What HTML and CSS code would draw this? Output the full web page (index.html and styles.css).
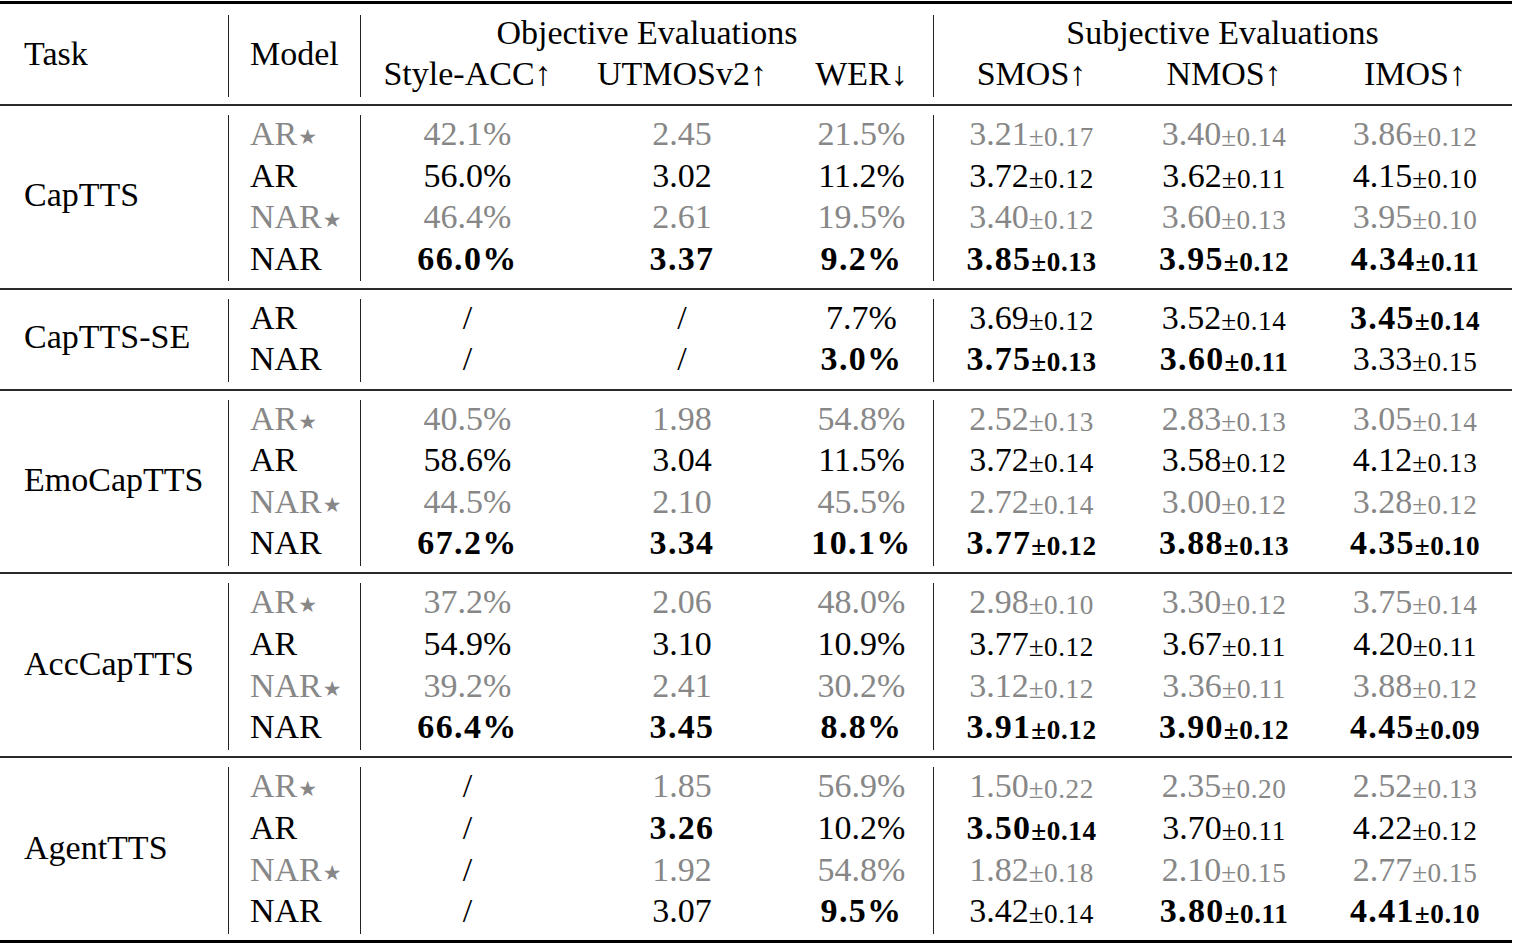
FILE: index.html
```html
<!DOCTYPE html>
<html lang="en">
<head>
<meta charset="utf-8">
<title>Evaluation results</title>
<link rel="stylesheet" href="styles.css">
</head>
<body>
<div class="table">
  <div class="heavy top"></div>

  <div class="head">
    <div class="h-task"><span class="ht">Task</span></div>
    <div class="h-model vl"><span class="ht">Model</span></div>
    <div class="group vl">
      <div class="ht gtitle">Objective Evaluations</div>
      <div class="gsub obj"><span class="ht">Style-ACC↑</span><span class="ht">UTMOSv2↑</span><span class="ht">WER↓</span></div>
    </div>
    <div class="group vl">
      <div class="ht gtitle">Subjective Evaluations</div>
      <div class="gsub subj"><span class="ht">SMOS↑</span><span class="ht">NMOS↑</span><span class="ht">IMOS↑</span></div>
    </div>
  </div>

  <div class="rule"></div>

  <div class="sec n4">
    <div class="task">CapTTS</div>
    <div class="m g">AR<span class="star">★</span></div><div class="v vl g">42.1%</div><div class="v g">2.45</div><div class="v g">21.5%</div><div class="v vl g">3.21<span class="pm">±0.17</span></div><div class="v g">3.40<span class="pm">±0.14</span></div><div class="v g">3.86<span class="pm">±0.12</span></div>
    <div class="m">AR</div><div class="v vl">56.0%</div><div class="v">3.02</div><div class="v">11.2%</div><div class="v vl">3.72<span class="pm">±0.12</span></div><div class="v">3.62<span class="pm">±0.11</span></div><div class="v">4.15<span class="pm">±0.10</span></div>
    <div class="m g">NAR<span class="star">★</span></div><div class="v vl g">46.4%</div><div class="v g">2.61</div><div class="v g">19.5%</div><div class="v vl g">3.40<span class="pm">±0.12</span></div><div class="v g">3.60<span class="pm">±0.13</span></div><div class="v g">3.95<span class="pm">±0.10</span></div>
    <div class="m">NAR</div><div class="v vl b">66.0%</div><div class="v b">3.37</div><div class="v b">9.2%</div><div class="v vl b">3.85<span class="pm">±0.13</span></div><div class="v b">3.95<span class="pm">±0.12</span></div><div class="v b">4.34<span class="pm">±0.11</span></div>
  </div>

  <div class="rule"></div>

  <div class="sec n2">
    <div class="task">CapTTS-SE</div>
    <div class="m">AR</div><div class="v vl">/</div><div class="v">/</div><div class="v">7.7%</div><div class="v vl">3.69<span class="pm">±0.12</span></div><div class="v">3.52<span class="pm">±0.14</span></div><div class="v b">3.45<span class="pm">±0.14</span></div>
    <div class="m">NAR</div><div class="v vl">/</div><div class="v">/</div><div class="v b">3.0%</div><div class="v vl b">3.75<span class="pm">±0.13</span></div><div class="v b">3.60<span class="pm">±0.11</span></div><div class="v">3.33<span class="pm">±0.15</span></div>
  </div>

  <div class="rule"></div>

  <div class="sec n4">
    <div class="task">EmoCapTTS</div>
    <div class="m g">AR<span class="star">★</span></div><div class="v vl g">40.5%</div><div class="v g">1.98</div><div class="v g">54.8%</div><div class="v vl g">2.52<span class="pm">±0.13</span></div><div class="v g">2.83<span class="pm">±0.13</span></div><div class="v g">3.05<span class="pm">±0.14</span></div>
    <div class="m">AR</div><div class="v vl">58.6%</div><div class="v">3.04</div><div class="v">11.5%</div><div class="v vl">3.72<span class="pm">±0.14</span></div><div class="v">3.58<span class="pm">±0.12</span></div><div class="v">4.12<span class="pm">±0.13</span></div>
    <div class="m g">NAR<span class="star">★</span></div><div class="v vl g">44.5%</div><div class="v g">2.10</div><div class="v g">45.5%</div><div class="v vl g">2.72<span class="pm">±0.14</span></div><div class="v g">3.00<span class="pm">±0.12</span></div><div class="v g">3.28<span class="pm">±0.12</span></div>
    <div class="m">NAR</div><div class="v vl b">67.2%</div><div class="v b">3.34</div><div class="v b">10.1%</div><div class="v vl b">3.77<span class="pm">±0.12</span></div><div class="v b">3.88<span class="pm">±0.13</span></div><div class="v b">4.35<span class="pm">±0.10</span></div>
  </div>

  <div class="rule"></div>

  <div class="sec n4">
    <div class="task">AccCapTTS</div>
    <div class="m g">AR<span class="star">★</span></div><div class="v vl g">37.2%</div><div class="v g">2.06</div><div class="v g">48.0%</div><div class="v vl g">2.98<span class="pm">±0.10</span></div><div class="v g">3.30<span class="pm">±0.12</span></div><div class="v g">3.75<span class="pm">±0.14</span></div>
    <div class="m">AR</div><div class="v vl">54.9%</div><div class="v">3.10</div><div class="v">10.9%</div><div class="v vl">3.77<span class="pm">±0.12</span></div><div class="v">3.67<span class="pm">±0.11</span></div><div class="v">4.20<span class="pm">±0.11</span></div>
    <div class="m g">NAR<span class="star">★</span></div><div class="v vl g">39.2%</div><div class="v g">2.41</div><div class="v g">30.2%</div><div class="v vl g">3.12<span class="pm">±0.12</span></div><div class="v g">3.36<span class="pm">±0.11</span></div><div class="v g">3.88<span class="pm">±0.12</span></div>
    <div class="m">NAR</div><div class="v vl b">66.4%</div><div class="v b">3.45</div><div class="v b">8.8%</div><div class="v vl b">3.91<span class="pm">±0.12</span></div><div class="v b">3.90<span class="pm">±0.12</span></div><div class="v b">4.45<span class="pm">±0.09</span></div>
  </div>

  <div class="rule"></div>

  <div class="sec n4">
    <div class="task">AgentTTS</div>
    <div class="m g">AR<span class="star">★</span></div><div class="v vl">/</div><div class="v g">1.85</div><div class="v g">56.9%</div><div class="v vl g">1.50<span class="pm">±0.22</span></div><div class="v g">2.35<span class="pm">±0.20</span></div><div class="v g">2.52<span class="pm">±0.13</span></div>
    <div class="m">AR</div><div class="v vl">/</div><div class="v b">3.26</div><div class="v">10.2%</div><div class="v vl b">3.50<span class="pm">±0.14</span></div><div class="v">3.70<span class="pm">±0.11</span></div><div class="v">4.22<span class="pm">±0.12</span></div>
    <div class="m g">NAR<span class="star">★</span></div><div class="v vl">/</div><div class="v g">1.92</div><div class="v g">54.8%</div><div class="v vl g">1.82<span class="pm">±0.18</span></div><div class="v g">2.10<span class="pm">±0.15</span></div><div class="v g">2.77<span class="pm">±0.15</span></div>
    <div class="m">NAR</div><div class="v vl">/</div><div class="v">3.07</div><div class="v b">9.5%</div><div class="v vl">3.42<span class="pm">±0.14</span></div><div class="v b">3.80<span class="pm">±0.11</span></div><div class="v b">4.41<span class="pm">±0.10</span></div>
  </div>

  <div class="heavy"></div>
</div>
</body>
</html>
```

FILE: styles.css
```css
* { box-sizing: border-box; }

body {
  margin: 0;
  background: #ffffff;
  color: #000000;
  font-family: "Liberation Serif", "Times New Roman", serif;
  font-size: 34px;
}

.table {
  width: 1512px;
}

.heavy {
  height: 3px;
  background: #000000;
}

.top {
  margin-top: 1px;
}

.rule {
  height: 2px;
  background: #2a2a2a;
}

.vl {
  border-left: 1px solid #222222;
}

/* header */
.head {
  display: grid;
  grid-template-columns: 228px 132px 573px 578px;
  padding: 11px 0 7px;
}

.ht {
  display: block;
  line-height: 35px;
  padding-bottom: 6px;
  white-space: nowrap;
}

.h-task {
  display: flex;
  align-items: center;
  padding-left: 24px;
}

.h-model {
  display: flex;
  align-items: center;
  padding-left: 21px;
}

.gtitle {
  text-align: center;
}

.gsub {
  display: grid;
  text-align: center;
}

.gsub.obj {
  grid-template-columns: 213px 216px 143px;
}

.gsub.subj {
  grid-template-columns: 195px 190px 192px;
}

/* body sections */
.sec {
  display: grid;
  grid-template-columns: 228px 132px 214px 216px 143px 196px 190px 192px;
  grid-auto-rows: 41.6px;
  padding: 9px 0 6.5px;
  white-space: nowrap;
}

.m,
.v {
  line-height: 37.6px;
  padding-bottom: 4px;
}

.task {
  grid-column: 1;
  display: flex;
  align-items: center;
  padding-left: 24px;
  padding-bottom: 6px;
}

.n4 .task { grid-row: 1 / span 4; }
.n2 .task { grid-row: 1 / span 2; }

.m {
  grid-column: 2;
  padding-left: 21px;
  border-left: 1px solid #222222;
}

.v {
  text-align: center;
}

.g {
  color: #878787;
}

.b {
  font-weight: 700;
  letter-spacing: 0.04em;
}

.pm {
  font-size: 0.8em;
  line-height: 1;
  vertical-align: -1px;
  letter-spacing: 0.02em;
}

.star {
  font-family: "DejaVu Sans", sans-serif;
  font-size: 21px;
  line-height: 1;
  vertical-align: 1px;
  margin-left: 1px;
}
```
